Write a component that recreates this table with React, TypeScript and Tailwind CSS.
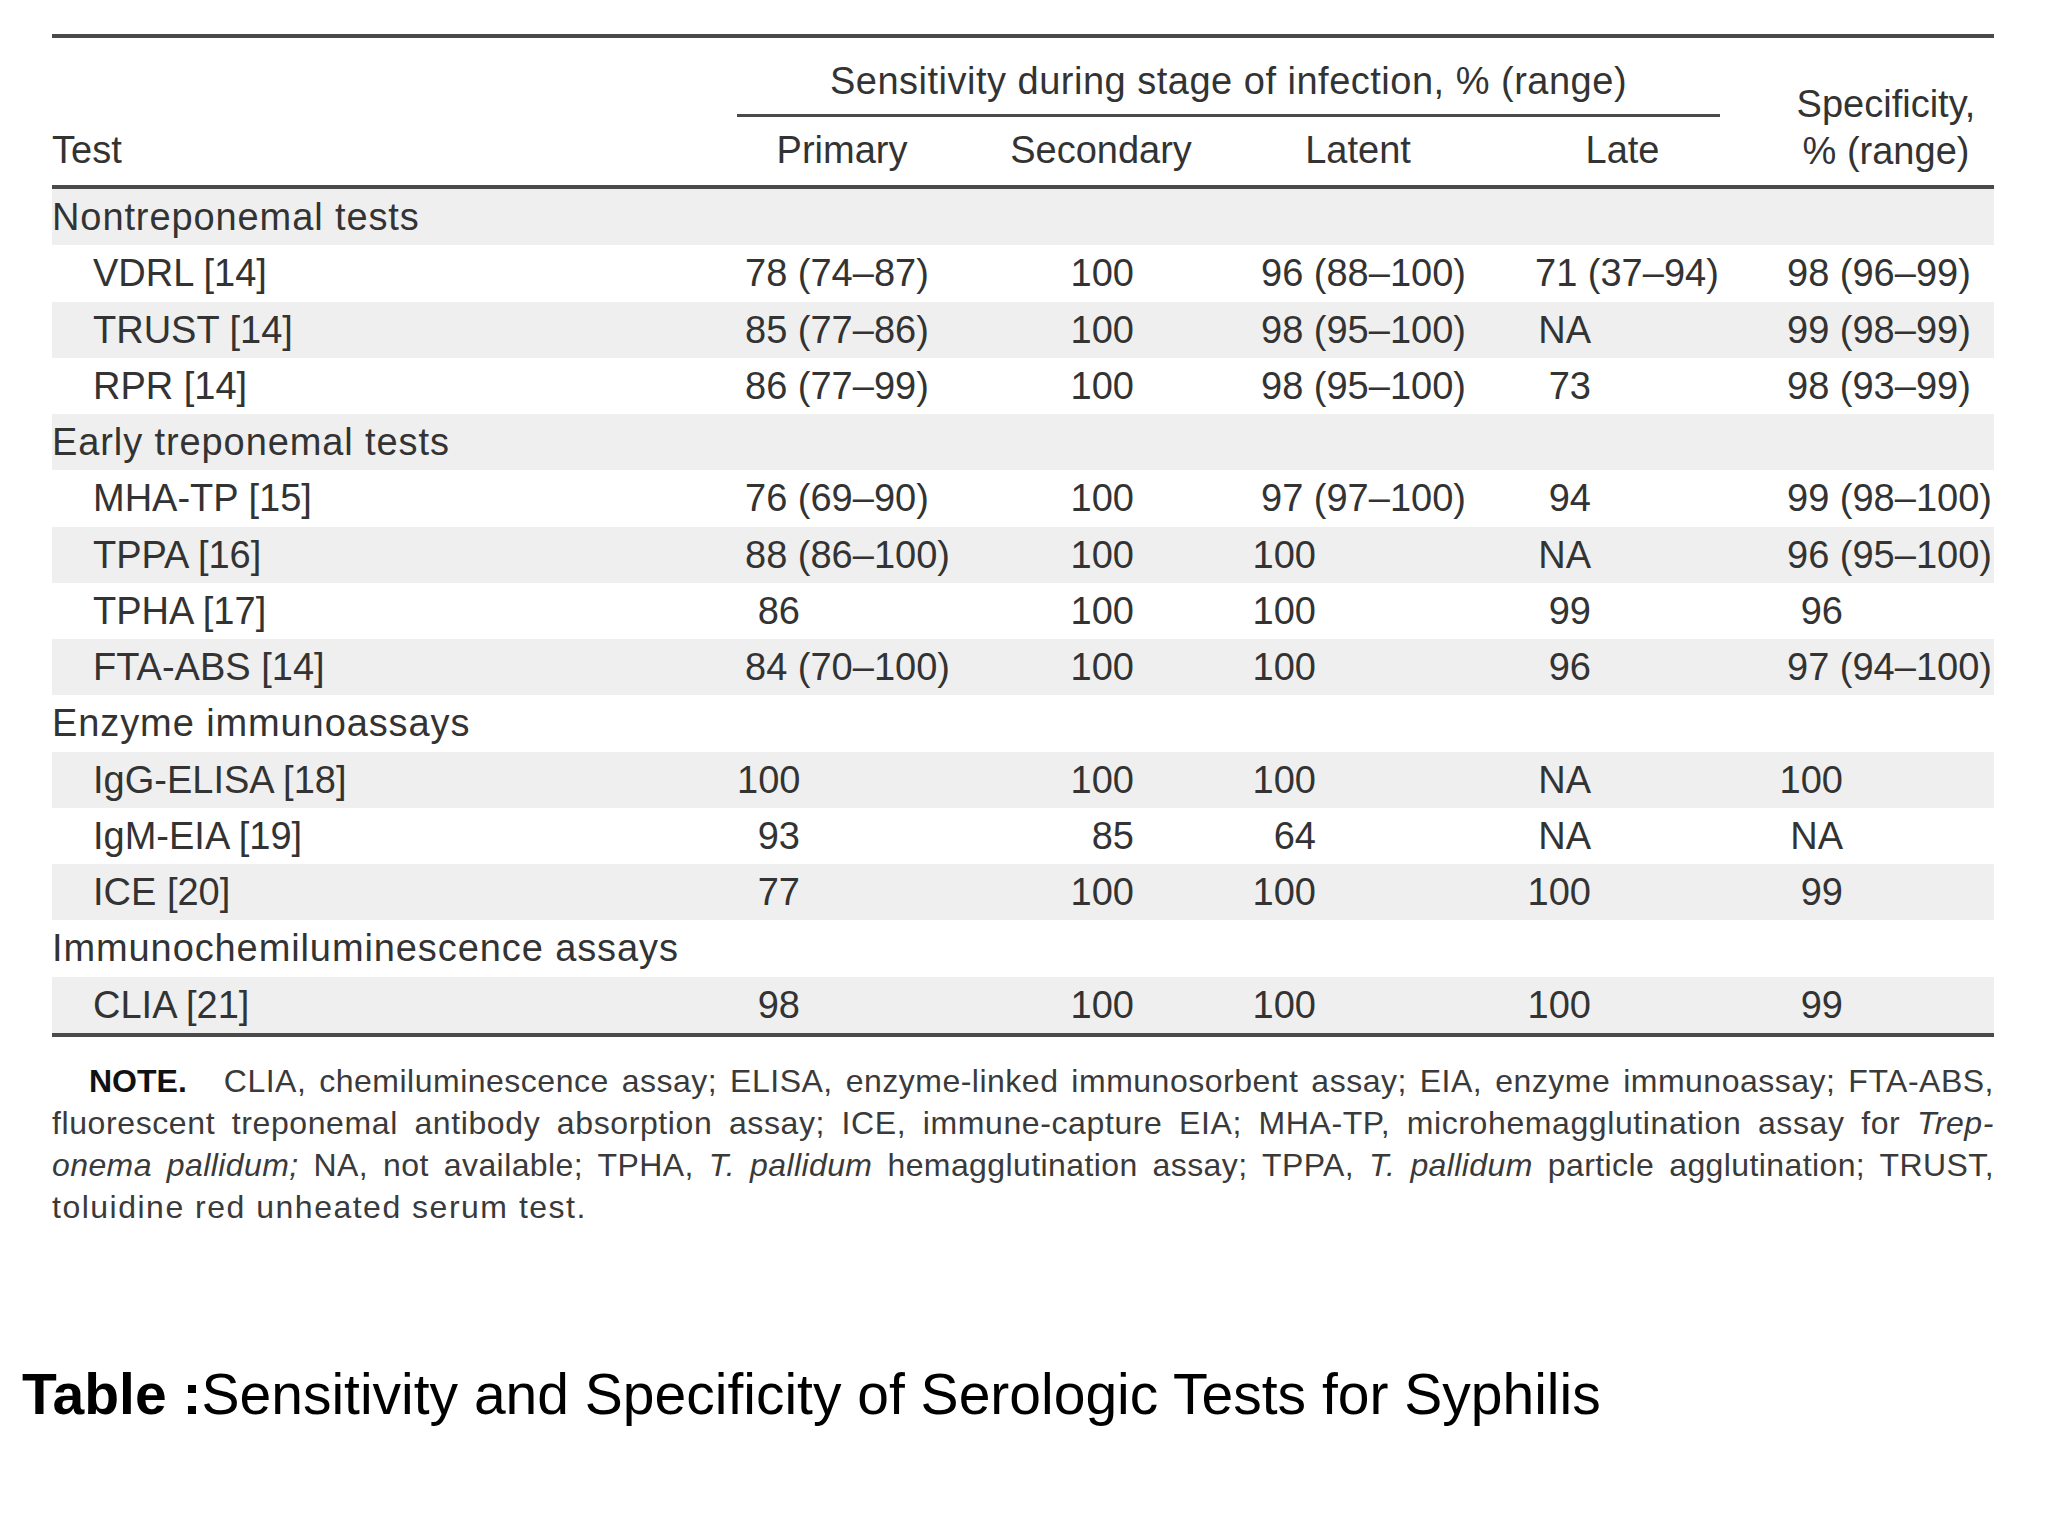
type Row = { label: string; group?: boolean; values?: string[] };

const rows: Row[] = [
  { label: "Nontreponemal tests", group: true },
  { label: "VDRL [14]", values: ["78 (74–87)", "100", "96 (88–100)", "71 (37–94)", "98 (96–99)"] },
  { label: "TRUST [14]", values: ["85 (77–86)", "100", "98 (95–100)", "NA", "99 (98–99)"] },
  { label: "RPR [14]", values: ["86 (77–99)", "100", "98 (95–100)", "73", "98 (93–99)"] },
  { label: "Early treponemal tests", group: true },
  { label: "MHA-TP [15]", values: ["76 (69–90)", "100", "97 (97–100)", "94", "99 (98–100)"] },
  { label: "TPPA [16]", values: ["88 (86–100)", "100", "100", "NA", "96 (95–100)"] },
  { label: "TPHA [17]", values: ["86", "100", "100", "99", "96"] },
  { label: "FTA-ABS [14]", values: ["84 (70–100)", "100", "100", "96", "97 (94–100)"] },
  { label: "Enzyme immunoassays", group: true },
  { label: "IgG-ELISA [18]", values: ["100", "100", "100", "NA", "100"] },
  { label: "IgM-EIA [19]", values: ["93", "85", "64", "NA", "NA"] },
  { label: "ICE [20]", values: ["77", "100", "100", "100", "99"] },
  { label: "Immunochemiluminescence assays", group: true },
  { label: "CLIA [21]", values: ["98", "100", "100", "100", "99"] },
];

// offsets inside each data column: ranges start at a left edge, single values line up on the right
const rangeCls = ["pl-[8px]", "pl-[8px]", "pl-[21px]", "pl-[35px]", "pl-[67px]"];
const singleCls = [
  "text-right pr-[200px]",
  "text-right pr-[106px]",
  "text-right pr-[184px]",
  "text-right pr-[129px]",
  "text-right pr-[151px]",
];

const Cell = ({ value, col }: { value: string; col: number }) => (
  <div className={`whitespace-nowrap ${value.includes("(") ? rangeCls[col] : singleCls[col]}`}>{value}</div>
);

const App = () => {
  return (
    <div className="w-[2048px] h-[1536px] bg-white font-['Liberation_Sans',Arial,sans-serif] text-[#333333]">
      <div className="pt-[34px] pl-[52px] w-[1994px]">
        {/* table */}
        <div className="w-[1942px] text-[38px]">
          <div className="border-t-4 border-[#4a4a4a]" />
          <div className="flex items-end h-[147px]">
            <div className="w-[685px] pb-[13px] leading-[44px]">Test</div>
            <div className="w-[983px] flex flex-col">
              <div className="pt-[21px] leading-[44px] text-center whitespace-nowrap tracking-[0.5px]">
                Sensitivity during stage of infection, % (range)
              </div>
              <div className="mt-[11px] border-t-[3px] border-[#4a4a4a]" />
              <div className="flex pt-[11px] pb-[13px] leading-[44px]">
                <div className="w-[210px] text-center">Primary</div>
                <div className="w-[308px] text-center">Secondary</div>
                <div className="w-[206px] text-center">Latent</div>
                <div className="w-[259px] pl-[64px] text-center">Late</div>
              </div>
            </div>
            <div className="w-[274px] pl-[58px] pb-[10px] text-center leading-[47px]">
              <div>Specificity,</div>
              <div>% (range)</div>
            </div>
          </div>
          <div className="border-t-4 border-[#4a4a4a]" />
          {rows.map((row, i) => (
            <div
              key={row.label}
              className={`grid grid-cols-[685px_263px_240px_260px_220px_274px] h-[56.27px] items-center ${i % 2 === 0 ? "bg-[#efefef]" : "bg-white"}`}
            >
              <div className={`whitespace-nowrap ${row.group ? "tracking-[0.9px]" : "pl-[41px]"}`}>{row.label}</div>
              {row.values?.map((v, c) => <Cell key={c} value={v} col={c} />)}
            </div>
          ))}
          <div className="border-t-4 border-[#4a4a4a]" />
        </div>

        {/* note */}
        <div className="mt-[23px] w-[1942px] text-[32px] leading-[42px] text-[#3a3a3a]">
          <div className="pl-[37px] text-justify [text-align-last:justify] tracking-[0.5px]">
            <span className="inline-block mr-[37px] font-bold text-[#111111] tracking-normal">NOTE.</span>CLIA, chemiluminescence assay; ELISA, enzyme-linked immunosorbent assay; EIA, enzyme immunoassay; FTA-ABS,
          </div>
          <div className="text-justify [text-align-last:justify] tracking-[0.6px]">
            fluorescent treponemal antibody absorption assay; ICE, immune-capture EIA; MHA-TP, microhemagglutination assay for <i>Trep-</i>
          </div>
          <div className="text-justify [text-align-last:justify] tracking-[0.4px]">
            <i>onema pallidum;</i> NA, not available; TPHA, <i>T. pallidum</i> hemagglutination assay; TPPA, <i>T. pallidum</i> particle agglutination; TRUST,
          </div>
          <div className="tracking-[1.5px]">toluidine red unheated serum test.</div>
        </div>
      </div>

      {/* caption */}
      <div className="mt-[134px] pl-[22px] text-[57px] leading-[64px] text-black whitespace-nowrap">
        <span className="font-bold">Table :</span>Sensitivity and Specificity of Serologic Tests for Syphilis
      </div>
    </div>
  );
};

export default App;
